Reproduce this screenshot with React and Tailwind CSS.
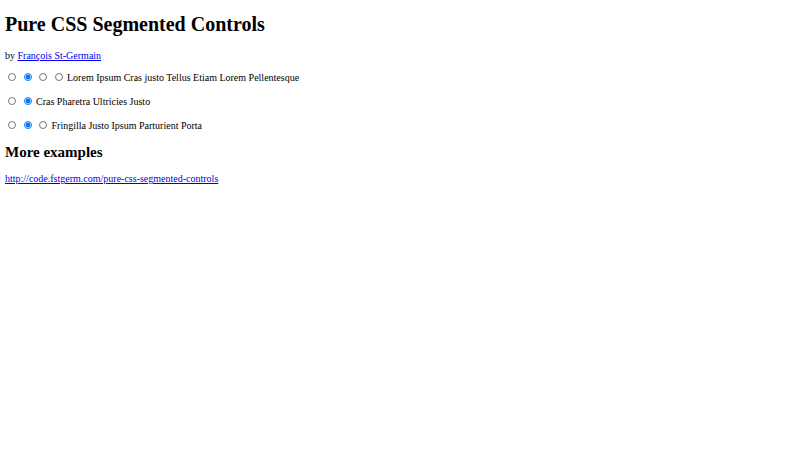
import React from "react";

const rows = [
  { count: 4, checked: 1, label: "Lorem Ipsum Cras justo Tellus Etiam Lorem Pellentesque" },
  { count: 2, checked: 1, label: "Cras Pharetra Ultricies Justo" },
  { count: 3, checked: 1, label: "Fringilla Justo Ipsum Parturient Porta" },
];

function Segmented({ count, checked, label, name }) {
  return (
    <div className="flex items-center h-[12px]">
      {Array.from({ length: count }).map((_, i) => (
        <input
          key={i}
          type="radio"
          name={name}
          defaultChecked={i === checked}
          className="m-0 ml-[3px] mr-[4.5px] w-2 h-2"
        />
      ))}
      <span>{label}</span>
    </div>
  );
}

export default function App() {
  return (
    <div className="min-h-screen bg-white text-black px-[5px] pt-[13.4px] text-[10px] leading-[11.5px] font-['Liberation_Serif','Times_New_Roman',serif]">
      <h1 className="text-[20px] font-bold leading-[23px] mb-[13.4px]">
        Pure CSS Segmented Controls
      </h1>
      <p>
        by{" "}
        <a href="#" className="text-[#0000ee] underline">
          François St-Germain
        </a>
      </p>
      <div className="mt-[10px] flex flex-col gap-[12px]">
        {rows.map((r, i) => (
          <Segmented key={i} name={"seg" + i} {...r} />
        ))}
      </div>
      <h2 className="mt-[12.4px] text-[15px] font-bold leading-[17.25px]">
        More examples
      </h2>
      <p className="mt-[12.4px]">
        <a href="#" className="text-[#0000ee] underline">
          http://code.fstgerm.com/pure-css-segmented-controls
        </a>
      </p>
    </div>
  );
}
